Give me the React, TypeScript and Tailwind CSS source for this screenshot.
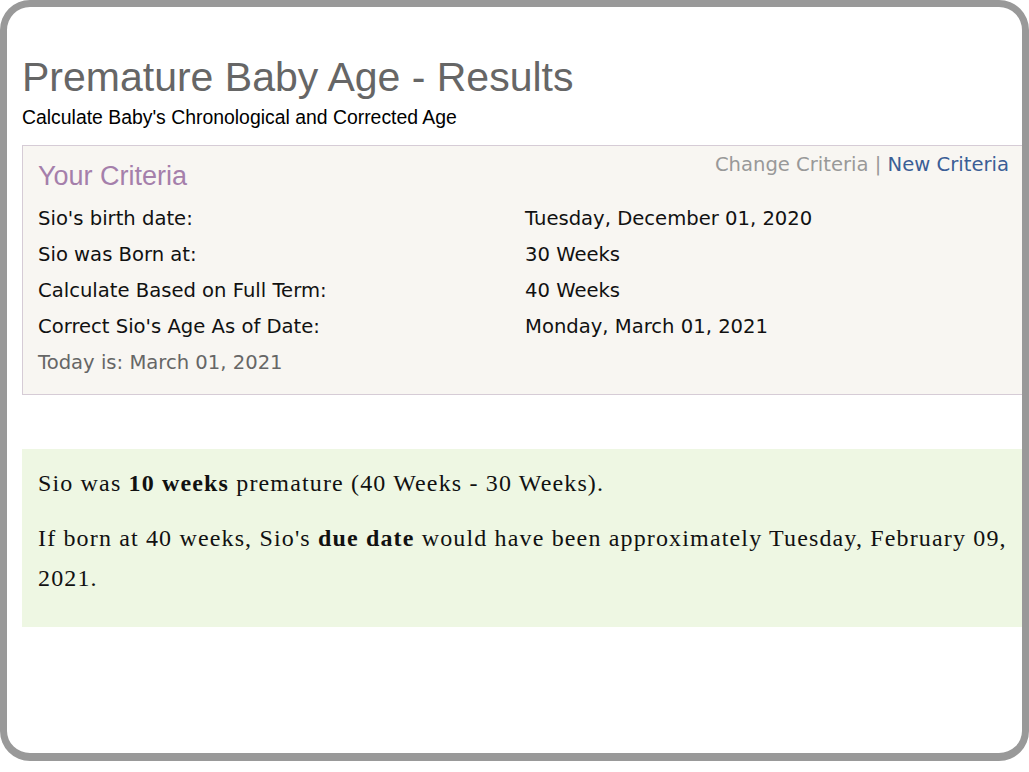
// Premature baby age calculator — results view.
const criteria = [
  { label: "Sio's birth date:", value: 'Tuesday, December 01, 2020' },
  { label: 'Sio was Born at:', value: '30 Weeks' },
  { label: 'Calculate Based on Full Term:', value: '40 Weeks' },
  { label: "Correct Sio's Age As of Date:", value: 'Monday, March 01, 2021' },
];

const sans = "font-['Liberation_Sans',Arial,sans-serif]";
const verdana = "font-['DejaVu_Sans',Verdana,sans-serif]";

export default function App() {
  return (
    <div className="w-[1029px] h-[772px] bg-white">
      <div className="h-[761px] border-[7px] border-b-[8px] border-[#999999] rounded-[30px] overflow-hidden bg-white">
        <div className="pl-[15px] pt-[46px]">
          <h1 className={`${sans} text-[41px] leading-[48px] text-[#666666]`}>
            Premature Baby Age - Results
          </h1>
          <p className={`${sans} text-[19.4px] leading-[22px] text-black mt-[5px]`}>
            Calculate Baby's Chronological and Corrected Age
          </p>

          {/* Criteria summary */}
          <div className="mt-[17px] h-[250px] border border-r-0 border-[#d6ccd6] bg-[#f8f6f2] pl-[15px] pr-[13px] pt-[8px]">
            <div className="flex items-start justify-between">
              <h2 className={`${sans} text-[27px] leading-[32px] text-[#a57fab] mt-[6px]`}>Your Criteria</h2>
              <div className={`${verdana} text-[19.6px] leading-[22px]`}>
                <span className="text-[#999999]">Change Criteria</span>
                <span className="text-[#999999]"> | </span>
                <span className="text-[#3b5e96]">New Criteria</span>
              </div>
            </div>
            <div className={`${verdana} text-[19.6px] text-[#111111] mt-[9px]`}>
              {criteria.map((row) => (
                <div key={row.label} className="flex h-[36px] items-center">
                  <span className="w-[487px]">{row.label}</span>
                  <span>{row.value}</span>
                </div>
              ))}
              <div className="h-[36px] flex items-center text-[#666666]">Today is: March 01, 2021</div>
            </div>
          </div>

          {/* Result summary */}
          <div className="mt-[54px] h-[178px] bg-[#eef7e3] pl-[16px] pt-[14px] font-['Liberation_Serif',Georgia,serif] text-[24px] tracking-[1.15px] leading-[40px] text-[#111111]">
            <p className="whitespace-nowrap">
              Sio was <b>10 weeks</b> premature (40 Weeks - 30 Weeks).
            </p>
            <p className="mt-[15px] whitespace-nowrap">
              If born at 40 weeks, Sio's <b>due date</b> would have been approximately Tuesday, February 09,
              <br />
              2021.
            </p>
          </div>
        </div>
      </div>
    </div>
  );
}
